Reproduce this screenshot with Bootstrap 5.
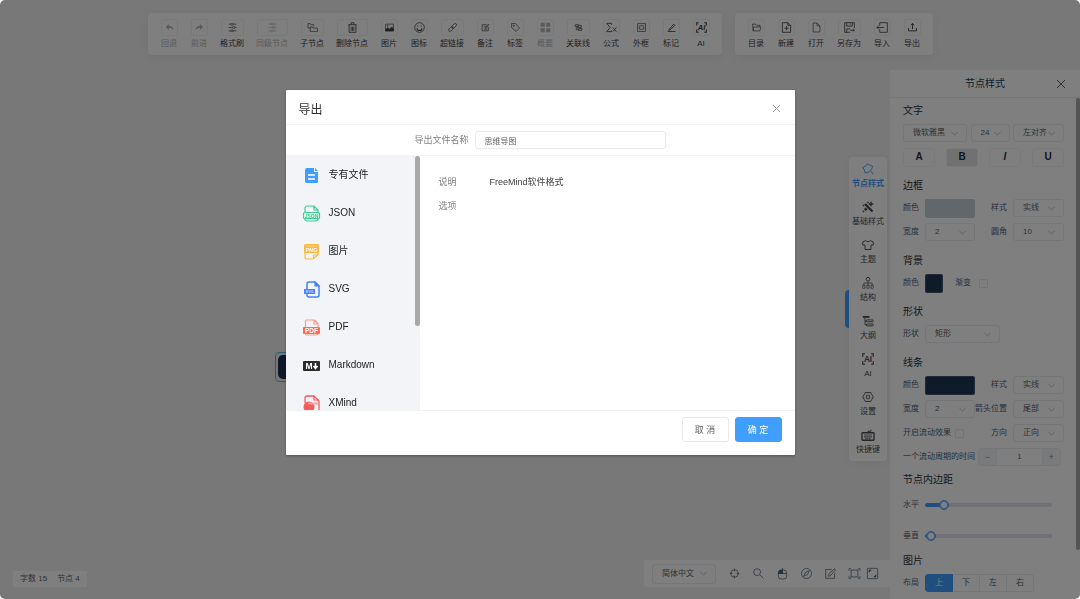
<!DOCTYPE html>
<html lang="zh-CN">
<head>
<meta charset="utf-8">
<meta name="viewport" content="width=device-width, initial-scale=1">
<title>思维导图</title>
<link href="https://cdn.jsdelivr.net/npm/bootstrap@5.3.0/dist/css/bootstrap.min.css" rel="stylesheet">
<script src="https://cdn.jsdelivr.net/npm/bootstrap@5.3.0/dist/js/bootstrap.bundle.min.js"></script>
<style>
:root{--ui:"Liberation Sans","Noto Sans CJK SC",sans-serif;--blue:#409eff;--line:#ebecf0;--ink:#303133;--slate:#506379}
body{font-family:var(--ui);font-size:8px;line-height:12px;color:var(--ink);background:#fff}
button,input,select{font-family:inherit}
svg{display:block;fill:none;stroke:currentColor;stroke-width:1.2;overflow:visible}
svg text{stroke:none;fill:currentColor;font-family:"Liberation Sans",sans-serif;font-weight:700}
.app{background:#f1f1f1;border-radius:5px}
.modal-backdrop.show{border-radius:5px}
/* floating toolbars */
.top{height:70px;padding-top:13px;gap:13px}
.tools{height:42px;padding:6px 12px 0 13px;gap:13px;background:#fff;border-radius:4px;box-shadow:0 2px 12px #0000000f}
.tool{width:17px;padding:0;border:0;background:none;color:#404245;font-size:8px;line-height:12px;white-space:nowrap;display:flex;flex-direction:column;align-items:center}
.tool.w3{width:23px}.tool.w4{width:31px}
.tool i{display:flex;align-items:center;justify-content:center;align-self:stretch;height:17px;border:1px solid #f3f3f3;border-radius:3px;margin-bottom:2px}
.tool svg{width:11px;height:11px}
.tool svg.sm{width:9px;height:9px}
.tool:disabled{color:#b4b4b4}
/* canvas */
.root-node{left:275px;top:282px;width:120px;height:30px;border:1px solid #57b5dd;border-radius:4px;padding:2px}
.root-node div{height:100%;background:#1c3050;border-radius:5px}
.tabs{width:38px;margin:87px 3px 0 0;background:#fff;border-radius:4px;box-shadow:0 2px 12px #0000000f}
.tabs .tab{border:0;background:none;padding:6px 0 0;width:100%;height:38px;font-size:8px;line-height:12px;color:#484a4d;white-space:nowrap;display:flex;flex-direction:column;align-items:center;gap:3px}
.tabs .tab.active{color:var(--blue);font-weight:700}
.tabs svg{width:12px;height:12px}
.handle{left:-4px;top:133px;width:4px;height:38px;padding:0;background:var(--blue);border-radius:4px 0 0 4px;border:0}
.bottom{padding:0 0 12px 13px}
.stats{background:#fff;padding:2px 7px;gap:10px;color:#606266}
.nav-tools{background:#fff;height:27px;gap:13px;padding:0 12px 0 8px;border-radius:3px 0 0 3px;color:var(--slate)}
.nav-tools button{border:0;background:none;padding:0;color:inherit}
.nav-tools svg{width:11px;height:11px;stroke-width:1.1}
.pair{gap:7px}
.lang{margin-right:5px}
/* style panel */
.panel{width:190px;background:#fff}
.panel header{height:28px;border-bottom:1px solid #ececec;font-size:10px;color:#2a3c52}
.panel header button{right:15px;border:0;background:none;padding:0;color:#506070}
.panel section{padding:0 16px 0 13px;margin-bottom:7px}
.panel section.near{margin-bottom:1px}
.panel h6{font-size:10px;font-weight:400;line-height:26px;margin:0;color:var(--ink)}
.prow{display:flex;align-items:center;height:18px;margin-bottom:6px}
.prow:last-child{margin-bottom:0}
.prow label,.prow .lbl{width:22px;color:var(--slate);white-space:nowrap;flex:none}
.prow label.auto{width:auto}
.prow label.end{width:auto;margin:0 6px 0 auto}
.form-select{font-size:8px;line-height:16px;height:18px;padding:0 16px 0 9px;border-color:var(--line);border-radius:3px;color:#606266;background-color:transparent;background-size:7px 7px;background-position:right 8px center;background-image:url("data:image/svg+xml,%3Csvg xmlns='http://www.w3.org/2000/svg' viewBox='0 0 16 16'%3E%3Cpath fill='none' stroke='%23b4b8c0' stroke-width='1.8' d='m1 4 7 8 7-8'/%3E%3C/svg%3E")}
.s39{width:39px}.s50{width:50px}.s51{width:51px}.s64{width:64px}.s75{width:75px}.s64.tall{height:20px}
.swatch{height:19px;border:1px solid #dadada33;border-radius:2px;padding:0}
.swatch.small-box{width:18px}
.fmt{width:32px;height:19px;border:1px solid #f5f5f5;border-radius:3px;background:none;color:#1f3046;font-size:10px;font-weight:700;line-height:16px;padding:0}
.fmt.active{background:#e3e3e3}
.form-check-input{width:9px;height:9px;margin:0;border:1px solid #e6e8ed}
.form-check-input[type=checkbox]{border-radius:1px}
.form-range{width:127px;height:12px;margin:0;padding:0}
.form-range::-webkit-slider-runnable-track{height:4px;border-radius:2px;background:linear-gradient(90deg,var(--blue) var(--fill),#dfe2ec var(--fill))}
.form-range::-webkit-slider-thumb{width:10px;height:10px;margin-top:-3px;background:#fff;border:1px solid var(--blue);box-shadow:inset 0 0 0 1px #7fbdff}
.sliders .prow{height:24px;margin-bottom:7px}
.sliders .prow:last-child{margin-bottom:0}
.num{width:83px;height:18px;border:1px solid var(--line);border-radius:3px;overflow:hidden;margin-left:auto;margin-right:3px}
.num button{width:17px;border:0;background:#f2f4f8;color:#909399;font-size:9px;padding:0;line-height:16px}
.num input{min-width:0;border:0;border-left:1px solid var(--line);border-right:1px solid var(--line);text-align:center;font-size:8px;color:#606266;padding:0;flex:1}
.btn-group>.place.btn{width:28px;height:18px;border:1px solid var(--line);border-radius:0;font-size:8px;line-height:16px;padding:0;color:#606266}
.btn-group>.place.btn:first-child{border-radius:3px 0 0 3px}
.btn-group>.place.btn:last-child{border-radius:0 3px 3px 0}
.btn-group>.place.btn.active{background:var(--blue);border-color:var(--blue);color:#fff}
.thumb-bar{background:#a8a8a8;border-radius:3px;right:0;top:0}
.panel .thumb-bar{width:4px;height:452px}
/* export dialog */
.modal-dialog{width:509px;max-width:none;margin:90px auto 0}
.modal-content{border:0;border-radius:1px;box-shadow:0 1px 3px #0000004d;font-size:9px;color:#808080}
.modal-header{height:35px;padding:6px 14px 0 13px;border-color:#f3f3f3;border-radius:0}
.modal-title{font-size:12px;line-height:18px;font-weight:400;color:var(--ink)}
.modal-header button{border:0;background:none;padding:0 1px 4px;color:#909399}
.name-row{height:31px;gap:6px;border-bottom:1px solid #f5f5f5}
.name-row input{width:191px;height:18px;padding:0 9px;font-size:8px;border-color:#e9ebee;border-radius:3px;color:#606266}
.export-body{height:254px}
.kinds{width:134px;background:#f2f4f8}
.kinds ul{height:100%;overflow-y:auto;scrollbar-width:none}
.kinds li{height:38px;padding-left:17px}
.kinds a{display:flex;align-items:center;gap:9px;height:38px;color:#222;font-size:10px;line-height:14px;text-decoration:none}
.kinds svg{width:17px;height:17px}
.kinds .thumb-bar{width:5px;height:170px}
.detail{padding:19px;row-gap:10px}
.detail dt{width:51px;font-weight:400;line-height:14px}
.detail dd{margin:0;color:#404040;line-height:14px}
.modal-footer{height:45px;padding:6px 13px 0;gap:6px;border-color:#f3f3f3;border-radius:0;align-items:flex-start}
.modal-footer .btn{width:47px;height:25px;margin:0;padding:0;font-size:9px;line-height:24px;border-radius:3px}
.btn-no{border:1px solid #e6e8ec;color:#606266}
.btn-yes{background:var(--blue);border-color:var(--blue);color:#fff}
</style>
</head>
<body>
<svg width="0" height="0" class="position-absolute" aria-hidden="true"><defs>
<symbol id="ai" viewBox="0 0 16 16"><path d="M1 5V1h3M12 1h3v4M15 11v4h-3M4 15H1v-4" stroke-width="1.6"/><text x="8" y="12" font-size="11" text-anchor="middle">AI</text></symbol>
<symbol id="brush" viewBox="0 0 16 16"><path d="M1 2h4m4 0h6M1 8h7m4 0h3M1 14h4m4 0h6"/><circle cx="7" cy="2" r="2"/><circle cx="10" cy="8" r="2"/><circle cx="7" cy="14" r="2"/></symbol>
</defs></svg>

<div class="app vh-100 d-flex flex-column overflow-hidden">
  <div class="top d-flex justify-content-center flex-shrink-0">
    <div class="tools d-flex">
      <button class="tool" disabled><i><svg class="sm" viewBox="0 0 16 16"><path fill="currentColor" stroke="none" d="m1 7 6-5v3c5 0 8 3 8 8-2-3-4-4-8-4v3z"/></svg></i>回退</button>
      <button class="tool" disabled><i><svg class="sm" viewBox="0 0 16 16"><path fill="currentColor" stroke="none" d="M15 7 9 2v3c-5 0-8 3-8 8 2-3 4-4 8-4v3z"/></svg></i>前进</button>
      <button class="tool w3"><i><svg class="sm"><use href="#brush"/></svg></i>格式刷</button>
      <button class="tool w4" disabled><i><svg class="sm"><use href="#brush"/></svg></i>同级节点</button>
      <button class="tool w3"><i><svg class="sm" viewBox="0 0 16 16"><path d="M4 9H0V1h4l1 2h5v3M4 7h4l1 2h8v6H4z"/></svg></i>子节点</button>
      <button class="tool w4"><i><svg viewBox="0 0 16 16"><path d="M2 4h12M6 4V1h4v3M3 4v11h10V4M6 7v6M8 7v6M10 7v6"/></svg></i>删除节点</button>
      <button class="tool"><i><svg class="sm" viewBox="0 0 16 16"><path d="M1 2h14v12H1z"/><path fill="currentColor" d="m1 12 4-4 3 3 4-4 3 3v4H1z"/><circle cx="5" cy="5" r=".8"/></svg></i>图片</button>
      <button class="tool"><i><svg viewBox="0 0 16 16"><circle cx="8" cy="8" r="7"/><path d="M4.500 9a3.500 3.500 0 0 0 7 0M5.500 5v1.500M10.500 5v1.500" stroke-width="1.500"/></svg></i>图标</button>
      <button class="tool w3"><i><svg class="sm" viewBox="0 0 16 16"><g transform="rotate(-45 8 8)"><rect x="-1" y="5.500" width="10" height="5" rx="2.500"/><rect x="7" y="5.500" width="10" height="5" rx="2.500"/></g></svg></i>超链接</button>
      <button class="tool"><i><svg class="sm" viewBox="0 0 16 16"><path d="M10 3H2v11h11V7M5 6h3M5 11h6M7 9l6-7 1 1-6 7z"/></svg></i>备注</button>
      <button class="tool"><i><svg class="sm" viewBox="0 0 16 16"><path d="M1 1h7l7 8-6 6-8-7z"/><circle cx="5" cy="5" r="1"/></svg></i>标签</button>
      <button class="tool" disabled><i><svg viewBox="0 0 16 16"><path fill="currentColor" stroke="none" d="M1 1h6v6H1zM9 1h6v6H9zM1 9h6v6H1zM9 9h6v6H9z"/></svg></i>概要</button>
      <button class="tool w3"><i><svg class="sm" viewBox="0 0 16 16"><path d="M2 3h6v3H2zM8 10h6v3H8zM8 4h5v3L4 9v3h4M3 7h5M9 9h5"/></svg></i>关联线</button>
      <button class="tool"><i><svg viewBox="0 0 16 16"><path d="M8 4V2H1l5 6-5 6h7v-2M10 8l5 6M15 8l-5 6"/></svg></i>公式</button>
      <button class="tool"><i><svg class="sm" viewBox="0 0 16 16"><path d="M1 1h14v14H1z"/><rect x="4" y="5" width="8" height="6" rx="1"/></svg></i>外框</button>
      <button class="tool"><i><svg class="sm" viewBox="0 0 16 16"><path d="M1 15h14M4 11l8-9 2 2-8 8-3 1z" stroke-width="1.500"/></svg></i>标记</button>
      <button class="tool"><i><svg><use href="#ai"/></svg></i>AI</button>
    </div>
    <div class="tools d-flex">
      <button class="tool"><i><svg class="sm" viewBox="0 0 16 16"><path d="M2 14 1 2h5l2 2h6v3M2 14 3 7h13l-2 7z"/></svg></i>目录</button>
      <button class="tool"><i><svg viewBox="0 0 16 16"><path d="M2 1h8l4 4v10H2zM10 1v4h4M8 6v6M5 9h6"/></svg></i>新建</button>
      <button class="tool"><i><svg class="sm" viewBox="0 0 16 16"><path d="M2 0h7l5 5v11H2zM9 0v5h5"/></svg></i>打开</button>
      <button class="tool w3"><i><svg viewBox="0 0 16 16"><path d="M9 15H1V1h14v8M4 1v5h8V1M9 2v2M4 15v-5h5M9 12h6m-2-2 2 2-2 2"/></svg></i>另存为</button>
      <button class="tool"><i><svg viewBox="0 0 16 16"><path d="M4 5V1h11v14H4v-4M0 8h10M3 5 0 8l3 3"/></svg></i>导入</button>
      <button class="tool"><i><svg class="sm" viewBox="0 0 16 16"><path d="M1 9v5h14V9M8 11V1M5 4l3-3 3 3" stroke-width="1.700"/></svg></i>导出</button>
    </div>
  </div>

  <div class="d-flex flex-fill overflow-hidden">
    <div class="d-flex flex-column flex-fill">
      <main class="d-flex flex-fill position-relative justify-content-end align-items-start">
        <div class="root-node position-absolute"><div></div></div>
        <nav class="tabs position-relative" aria-label="侧边栏">
          <button class="handle position-absolute" aria-label="收起"></button>
          <button class="tab active"><svg viewBox="0 0 16 16"><path d="M8 13H4L3 9 1 6l4-2 2-3 4 2 3 1-1 4M8 13l3-3M13 8l-2 2 4 5"/></svg>节点样式</button>
          <button class="tab"><svg viewBox="0 0 16 16"><path d="m4 4 10 10" stroke-width="3"/><path d="M12 1v6M9 4h6M5 9v4M3 11h4M8 1v2M1 6h2M1 14h2" stroke-width="1.800"/></svg>基础样式</button>
          <button class="tab"><svg viewBox="0 0 16 16"><path d="M5 2 1 4v4h3v6h8V8h3V4l-4-2c-1 2-5 2-6 0z"/></svg>主题</button>
          <button class="tab"><svg viewBox="0 0 16 16"><circle cx="8" cy="3" r="2.500"/><path d="M8 6v5M2.500 11V8h11v3M1 11h3v4H1zM6.500 11h3v4h-3zM12 11h3v4h-3z" stroke-width=".9"/></svg>结构</button>
          <button class="tab"><svg viewBox="0 0 16 16"><path d="M1 2.500h9" stroke-width="2.500"/><path d="M4 4v9h3M4 8h2"/><rect x="6" y="6.500" width="9" height="2.500" rx="1"/><rect x="6" y="12" width="9" height="2.500" rx="1"/></svg>大纲</button>
          <button class="tab"><svg><use href="#ai"/></svg>AI</button>
          <button class="tab"><svg viewBox="0 0 16 16"><path d="M4.500 2h7L15 8l-3.500 6h-7L1 8z"/><circle cx="8" cy="8" r="2.500"/></svg>设置</button>
          <button class="tab"><svg viewBox="0 0 16 16"><rect x="0" y="5" width="16" height="10" rx="1" stroke-width="1.800"/><path d="M3 8h10M3 10.500h10M4 13h8" stroke-width="1.400" stroke-dasharray="2 .7"/><path d="M8 5V3h4V1"/></svg>快捷键</button>
        </nav>
      </main>
      <div class="bottom d-flex justify-content-between align-items-end">
        <div class="stats d-flex"><span>字数 15</span><span>节点 4</span></div>
        <div class="nav-tools d-flex align-items-center">
          <select class="form-select s64 tall" aria-label="语言"><option>简体中文</option></select>
          <button aria-label="回到根节点"><svg viewBox="0 0 16 16"><circle cx="8" cy="8" r="5.500"/><path d="M8 1v4M8 11v4M1 8h4M11 8h4"/></svg></button>
          <button aria-label="搜索"><svg viewBox="0 0 16 16"><circle cx="6" cy="6" r="5"/><path d="m10 10 5 5"/></svg></button>
          <button aria-label="鼠标"><svg viewBox="0 0 16 16"><rect x="2" y="3" width="12" height="13" rx="4"/><path d="M2 8h12M8 0v8"/><path fill="currentColor" d="M8 3v5H2c0-4 2-5 6-5z"/></svg></button>
          <button aria-label="小地图"><svg viewBox="0 0 16 16"><circle cx="8" cy="8" r="7.300"/><path d="M12 4 9.500 9.500 4 12l2.500-5.500z"/></svg></button>
          <button aria-label="只读"><svg viewBox="0 0 16 16"><path d="M10 2H1v13h13V7M6 8l8-7 1 2-7 8-3 1z"/></svg></button>
          <div class="pair d-flex">
            <button aria-label="适应画布"><svg viewBox="0 0 16 16"><rect x="3" y="3" width="10" height="10"/><path d="M0 4V1h3M13 1h3v3M16 12v3h-3M3 15H0v-3"/></svg></button>
            <button aria-label="全屏"><svg viewBox="0 0 16 16"><rect x=".5" y=".5" width="15" height="15" rx="1"/><path fill="currentColor" d="M3 6V3h3zM13 10v3h-3z"/></svg></button>
          </div>
        </div>
      </div>
    </div>

    <aside class="panel d-flex flex-column flex-shrink-0">
      <header class="d-flex align-items-center justify-content-center position-relative flex-shrink-0">节点样式
        <button class="position-absolute" aria-label="关闭"><svg width="8" height="8" viewBox="0 0 8 8"><path d="m0 0 8 8M8 0 0 8" stroke-width="1"/></svg></button>
      </header>
      <div class="flex-fill overflow-hidden position-relative">
        <div class="thumb-bar position-absolute"></div>
        <section>
          <h6>文字</h6>
          <div class="prow justify-content-between">
            <select class="form-select s64" aria-label="字体"><option>微软雅黑</option></select>
            <select class="form-select s39" aria-label="字号"><option>24</option></select>
            <select class="form-select s51" aria-label="对齐"><option>左对齐</option></select>
          </div>
          <div class="prow justify-content-between">
            <button class="fmt">A</button><button class="fmt active">B</button><button class="fmt fst-italic">I</button><button class="fmt">U</button>
          </div>
        </section>
        <section>
          <h6>边框</h6>
          <div class="prow"><span class="lbl">颜色</span><button class="swatch s50" style="background:#c4cfd6" aria-label="边框颜色"></button><label class="end" for="bs">样式</label><select id="bs" class="form-select s51"><option>实线</option></select></div>
          <div class="prow"><label for="bw">宽度</label><select id="bw" class="form-select s50"><option>2</option></select><label class="end" for="br">圆角</label><select id="br" class="form-select s51"><option>10</option></select></div>
        </section>
        <section>
          <h6>背景</h6>
          <div class="prow"><span class="lbl">颜色</span><button class="swatch small-box" style="background:#1e3557" aria-label="背景颜色"></button><label class="ms-2 ps-1 w-auto me-1 pe-1" for="grad">渐变</label><input id="grad" type="checkbox" class="form-check-input"></div>
        </section>
        <section>
          <h6>形状</h6>
          <div class="prow"><label for="shape">形状</label><select id="shape" class="form-select s75"><option>矩形</option></select></div>
        </section>
        <section class="near">
          <h6>线条</h6>
          <div class="prow"><span class="lbl">颜色</span><button class="swatch s50" style="background:#1e3557" aria-label="线条颜色"></button><label class="end" for="ls">样式</label><select id="ls" class="form-select s51"><option>实线</option></select></div>
          <div class="prow"><label for="lw">宽度</label><select id="lw" class="form-select s50"><option>2</option></select><label class="end" for="ap">箭头位置</label><select id="ap" class="form-select s51"><option>尾部</option></select></div>
          <div class="prow"><label class="auto me-1" for="flow">开启流动效果</label><input id="flow" type="checkbox" class="form-check-input"><label class="end" for="dir">方向</label><select id="dir" class="form-select s51"><option>正向</option></select></div>
          <div class="prow"><label class="auto" for="dur">一个流动周期的时间</label><div class="num d-flex"><button aria-label="减少">−</button><input id="dur" type="text" value="1"><button aria-label="增加">+</button></div></div>
        </section>
        <section class="sliders mb-0">
          <h6>节点内边距</h6>
          <div class="prow"><label for="px">水平</label><input id="px" type="range" class="form-range" value="12" style="--fill:15%"></div>
          <div class="prow"><label for="py">垂直</label><input id="py" type="range" class="form-range" value="1" style="--fill:5%"></div>
        </section>
        <section>
          <h6>图片</h6>
          <div class="prow"><span class="lbl">布局</span><div class="btn-group" role="group" aria-label="布局"><button class="btn place active">上</button><button class="btn place">下</button><button class="btn place">左</button><button class="btn place">右</button></div></div>
        </section>
      </div>
    </aside>
  </div>
</div>

<div class="modal-backdrop show"></div>
<div class="modal show d-block" tabindex="-1" role="dialog" aria-labelledby="dlgTitle">
  <div class="modal-dialog">
    <div class="modal-content">
      <div class="modal-header">
        <h5 class="modal-title" id="dlgTitle">导出</h5>
        <button aria-label="关闭"><svg width="7" height="7" viewBox="0 0 8 8"><path d="m0 0 8 8M8 0 0 8" stroke-width="1"/></svg></button>
      </div>
      <div class="name-row d-flex justify-content-center align-items-center">
        <label for="fname">导出文件名称</label><input id="fname" class="form-control" type="text" value="思维导图">
      </div>
      <div class="export-body d-flex">
        <div class="kinds position-relative flex-shrink-0">
          <ul class="list-unstyled m-0">
            <li><a href="#"><svg viewBox="0 0 17 17" style="color:#409eff"><path fill="currentColor" stroke="none" d="M4 1h7v4h4v10a1 1 0 0 1-1 1H4a2 2 0 0 1-2-1V3a2 2 0 0 1 2-2zM12 1l3 3h-3z"/><path stroke="#fff" stroke-width="1.500" d="M5 8h7M5 12h7"/></svg><span>专有文件</span></a></li>
            <li><a href="#"><svg viewBox="0 0 17 17" style="color:#3fd08f"><path d="M2 7V3a2 2 0 0 1 2-2h7l4 4v2M2 13v2l2 1h9l2-1v-2M11 1v4h4"/><rect x=".5" y="7.500" width="16" height="6" rx="1" fill="#e2f8ee"/><text x="8.500" y="12.500" font-size="5" text-anchor="middle">JSON</text></svg><span>JSON</span></a></li>
            <li><a href="#"><svg viewBox="0 0 17 17" style="color:#ffb83d"><path d="M2 9v6l1 1h7l5-4V9M10.500 16v-4h4"/><rect x="1" y="1" width="15" height="9" rx="1.500" fill="currentColor" stroke="none"/><path d="M3 3h11" stroke="#ffd994" stroke-width=".8"/><text x="8.500" y="8.500" font-size="5.500" text-anchor="middle" style="fill:#fff">PNG</text></svg><span>图片</span></a></li>
            <li><a href="#"><svg viewBox="0 0 17 17" style="color:#4480fb"><path stroke-width="1.500" d="M4 8V3q0-2 2-2h6l4 4v9q0 2-2 2H6q-2 0-2-2v-1"/><path fill="currentColor" d="M12 1v4h4z"/><rect x="1" y="8" width="11" height="5" fill="currentColor" stroke="none"/><text x="6.500" y="12" font-size="4" text-anchor="middle" style="fill:#c3d6ff">SVG</text></svg><span>SVG</span></a></li>
            <li><a href="#"><svg viewBox="0 0 17 17" style="color:#ff6b4f"><path stroke="#ff9b87" d="M2.500 8V2q0-1 1-1h8l3.500 3.500V8M11 1v4h4M2.500 14v1q0 1 1 1h10q1.500 0 1.500-1v-1"/><rect x="0" y="8" width="17" height="7" rx="1" fill="currentColor" stroke="none"/><text x="8.500" y="14" font-size="6.500" text-anchor="middle" style="fill:#fff">PDF</text></svg><span>PDF</span></a></li>
            <li><a href="#"><svg viewBox="0 0 17 17"><rect x="0" y="4" width="17" height="10" rx="1" fill="#2b2b2b" stroke="none"/><text x="6" y="12" font-size="8.500" text-anchor="middle" style="fill:#fff">M</text><path d="M12.500 6v5M10.500 9l2 2.500 2-2.500" stroke="#fff" stroke-width="1.500"/></svg><span>Markdown</span></a></li>
            <li><a href="#"><svg viewBox="0 0 17 17" style="color:#f45b5b"><path stroke-width="1.300" d="M2 8V3q0-2 2-2h7l5 5v10"/><path d="M11 1v4h5"/><circle cx="6" cy="12" r="5.500" fill="currentColor" stroke="none"/><path d="M5 8.500h10" stroke="#f9a3a3" stroke-width="2"/></svg><span>XMind</span></a></li>
            <li></li><li></li><li></li>
          </ul>
          <div class="thumb-bar position-absolute"></div>
        </div>
        <dl class="detail d-flex flex-column m-0">
          <div class="d-flex"><dt>说明</dt><dd>FreeMind软件格式</dd></div>
          <div class="d-flex"><dt>选项</dt><dd></dd></div>
        </dl>
      </div>
      <div class="modal-footer">
        <button class="btn btn-no">取 消</button>
        <button class="btn btn-yes">确 定</button>
      </div>
    </div>
  </div>
</div>
</body>
</html>
